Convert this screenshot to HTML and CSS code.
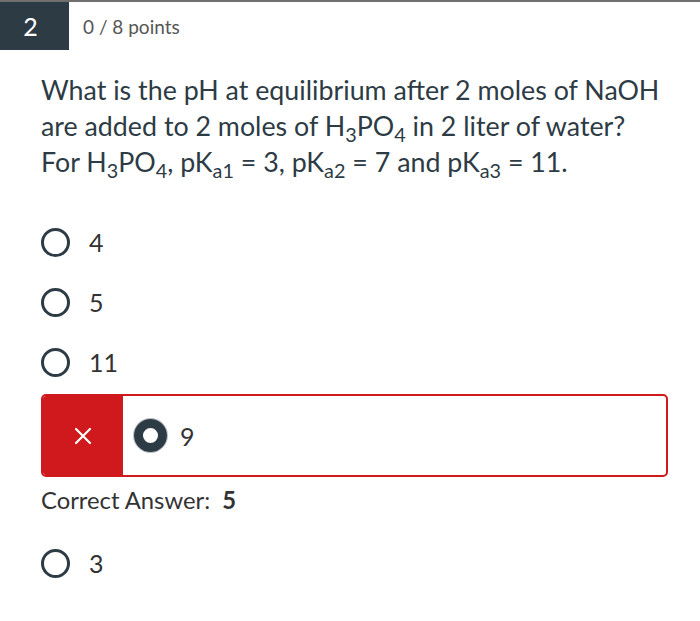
FILE: index.html
```html
<!DOCTYPE html>
<html>
<head>
<meta charset="utf-8">
<link rel="stylesheet" href="styles.css">
</head>
<body>
<div class="header">
  <div class="qnum">2</div>
  <div class="points">0 / 8 points</div>
</div>
<div class="question">
  What is the pH at equilibrium after 2 moles of NaOH are added to 2 moles of H<sub>3</sub>PO<sub>4</sub> in 2 liter of water?<br>
  For H<sub>3</sub>PO<sub>4</sub>, pK<sub>a1</sub> = 3, pK<sub>a2</sub> = 7 and pK<sub>a3</sub> = 11.
</div>
<div class="answers">
  <div class="option"><span class="radio"></span><span class="label">4</span></div>
  <div class="option"><span class="radio"></span><span class="label">5</span></div>
  <div class="option"><span class="radio"></span><span class="label">11</span></div>
  <div class="wrong">
    <div class="mark">
      <svg width="20" height="20" viewBox="0 0 20 20"><path d="M3 3 L17 17 M17 3 L3 17" stroke="#fff" stroke-width="2.2" stroke-linecap="round"/></svg>
    </div>
    <div class="wrong-body"><span class="radio filled"></span><span class="label">9</span></div>
  </div>
  <div class="correct">Correct Answer:&nbsp; <b>5</b></div>
  <div class="option last"><span class="radio"></span><span class="label">3</span></div>
</div>
</body>
</html>
```
FILE: styles.css
```css
html, body {
  margin: 0;
  padding: 0;
  background: #fff;
}
body {
  font-family: Lato, "Open Sans", sans-serif;
  color: #2d3b45;
  width: 700px;
  height: 621px;
  overflow: hidden;
}
.header {
  display: flex;
  align-items: stretch;
  height: 48px;
  border-top: 2px solid #6f6f6f;
}
.qnum {
  width: 69px;
  background: #2d3b45;
  color: #fff;
  font-size: 25px;
  display: flex;
  align-items: center;
  justify-content: center;
  padding-right: 8px;
  box-sizing: border-box;
}
.points {
  display: flex;
  align-items: center;
  padding-left: 14px;
  font-size: 19px;
  color: #555;
}
.question {
  margin: 22px 0 0 41px;
  width: 650px;
  font-size: 26.8px;
  line-height: 36px;
  color: #2d3b45;
}
.question sub {
  font-size: 0.74em;
  line-height: 0;
  vertical-align: -0.28em;
}
.answers {
  margin-top: 32px;
  padding-left: 41px;
}
.option {
  display: flex;
  align-items: center;
  height: 60px;
}
.radio {
  box-sizing: border-box;
  width: 29px;
  height: 29px;
  border: 3.5px solid #2d3b45;
  border-radius: 50%;
  flex: none;
}
.label {
  margin-left: 19px;
  font-size: 25px;
  color: #333;
}
.wrong {
  margin-top: 2px;
  width: 627px;
  height: 83px;
  box-sizing: border-box;
  border: 2.5px solid #d0191c;
  border-radius: 5px;
  display: flex;
  overflow: hidden;
}
.mark {
  width: 80px;
  background: #d0191c;
  display: flex;
  align-items: center;
  justify-content: center;
}
.wrong-body {
  display: flex;
  align-items: center;
  padding-left: 11px;
}
.radio.filled {
  width: 33px;
  height: 33px;
  border: 9.5px solid #2d3b45;
  box-shadow: 0 0 0 1px #b8bec2;
}
.wrong-body .label {
  margin-left: 13px;
}
.correct {
  margin-top: 10px;
  font-size: 23.8px;
  line-height: 26px;
  color: #333;
}
.correct b {
  font-weight: 700;
}
.option.last {
  margin-top: 25px;
  height: 50px;
}
```
